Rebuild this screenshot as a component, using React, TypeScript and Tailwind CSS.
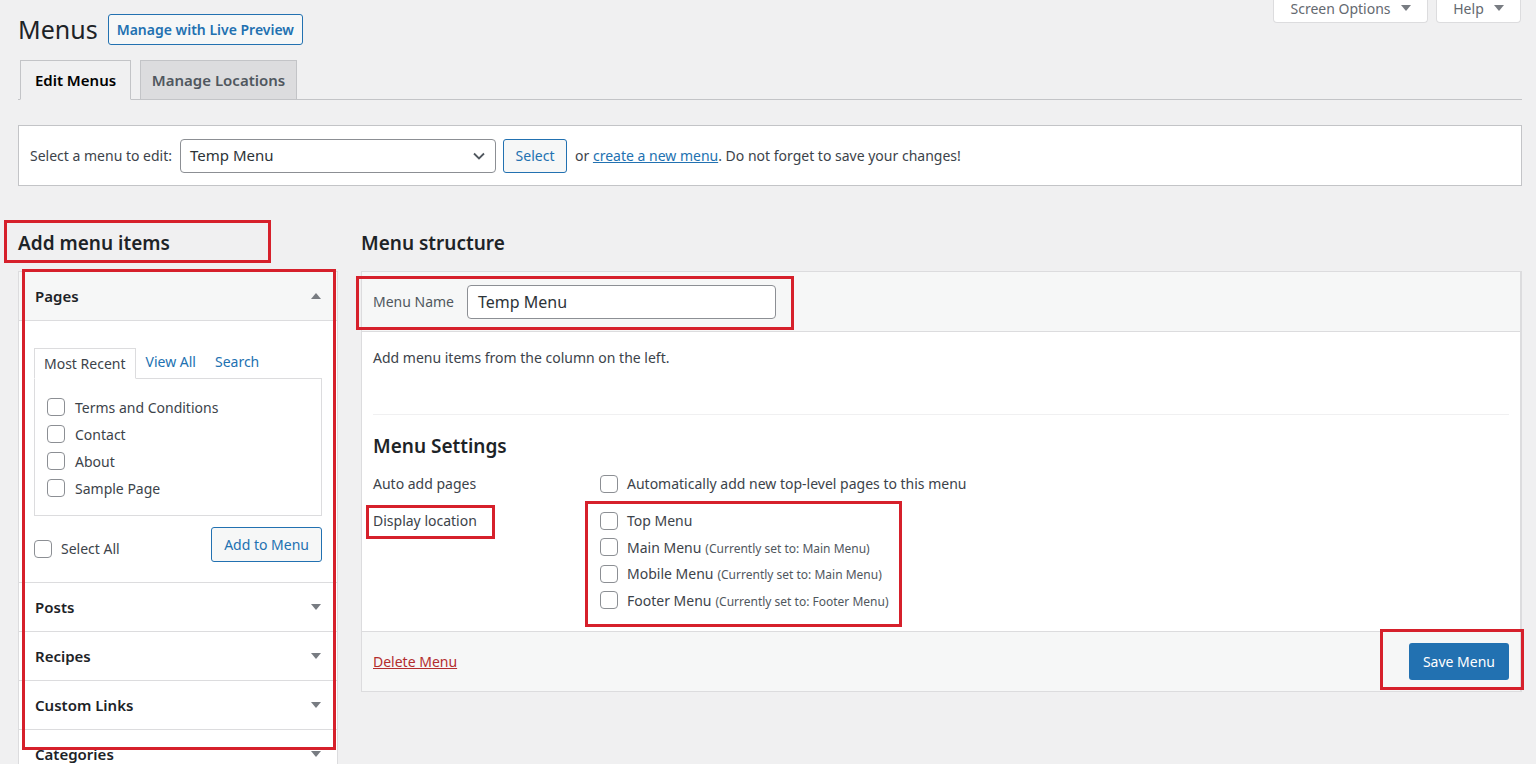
import * as React from "react";

// Red annotation frame laid over a relative parent
function Mark({ className }: { className: string }) {
  return <span className={`pointer-events-none absolute border-[3px] border-[#d6202b] ${className}`} />;
}

function Box({ className = "" }: { className?: string }) {
  return (
    <span
      className={`inline-block h-[18px] w-[18px] shrink-0 rounded-[4px] border border-[#8c8f94] bg-white ${className}`}
    />
  );
}

function Caret({ up = false }: { up?: boolean }) {
  return (
    <svg width="10" height="6" viewBox="0 0 10 6" className="fill-[#787c82]">
      {up ? <path d="M0 6 L5 0 L10 6 Z" /> : <path d="M0 0 L10 0 L5 6 Z" />}
    </svg>
  );
}

function SectionRow({ title }: { title: string }) {
  return (
    <div className="flex h-[49px] items-center justify-between border-t border-[#dcdcde] px-[16px]">
      <span className="text-[15px] font-semibold text-[#1d2327]">{title}</span>
      <Caret />
    </div>
  );
}

const pages = ["Terms and Conditions", "Contact", "About", "Sample Page"];

const locations = [
  { name: "Top Menu", note: "" },
  { name: "Main Menu", note: "(Currently set to: Main Menu)" },
  { name: "Mobile Menu", note: "(Currently set to: Main Menu)" },
  { name: "Footer Menu", note: "(Currently set to: Footer Menu)" },
];

export default function App() {
  return (
    <div className="h-[764px] overflow-hidden bg-[#f0f0f1] pl-[18px] pr-[14px] font-['Noto_Sans',sans-serif] text-[14px] text-[#3c434a]">
      {/* screen meta tabs */}
      <div className="float-right flex gap-[8px] pr-[1px]">
        <div className="flex h-[23px] w-[155px] items-center justify-center gap-[10px] rounded-b-[4px] border border-t-0 border-[#dcdcde] bg-white text-[14px] leading-[18px] text-[#646970]">
          <span className="-mt-[5px]">Screen Options</span>
          <span className="-mt-[6px]">
            <Caret />
          </span>
        </div>
        <div className="flex h-[23px] w-[85px] items-center justify-center gap-[10px] rounded-b-[4px] border border-t-0 border-[#dcdcde] bg-white text-[14px] leading-[18px] text-[#646970]">
          <span className="-mt-[5px]">Help</span>
          <span className="-mt-[6px]">
            <Caret />
          </span>
        </div>
      </div>

      <div className="flex items-center gap-[10px] pt-[12px]">
        <h1 className="text-[25px] leading-[34px] text-[#1d2327]">Menus</h1>
        <button className="h-[31px] rounded-[3px] border border-[#2271b1] bg-[#f6f7f7] px-[8px] text-[14px] font-semibold text-[#2271b1]">
          Manage with Live Preview
        </button>
      </div>

      {/* nav tabs */}
      <div className="mt-[14px] flex gap-[9px] border-b border-[#c3c4c7] pl-[2px]">
        <div className="-mb-px flex h-[40px] w-[111px] items-center justify-center border border-b-[#f0f0f1] border-[#c3c4c7] bg-[#f0f0f1] text-[15px] font-semibold text-[#000]">
          Edit Menus
        </div>
        <div className="flex h-[39px] w-[157px] items-center justify-center border border-b-0 border-[#c3c4c7] bg-[#dcdcde] text-[15px] font-semibold text-[#50575e]">
          Manage Locations
        </div>
      </div>

      {/* menu picker */}
      <div className="mt-[25px] flex h-[61px] items-center border border-[#c3c4c7] bg-white pl-[11px] text-[14px]">
        <span>Select a menu to edit:</span>
        <div className="ml-[8px] flex h-[34px] w-[316px] items-center justify-between rounded-[4px] border border-[#8c8f94] pl-[9px] pr-[10px] text-[15px] text-[#2c3338]">
          <span>Temp Menu</span>
          <svg width="12" height="8" viewBox="0 0 12 8" fill="none" stroke="#50575e" strokeWidth="1.8">
            <path d="M1 1.5 L6 6.5 L11 1.5" />
          </svg>
        </div>
        <button className="ml-[7px] h-[34px] w-[64px] rounded-[3px] border border-[#2271b1] bg-[#f6f7f7] text-[14px] text-[#2271b1]">
          Select
        </button>
        <span className="ml-[8px]">
          or <a className="text-[#2271b1] underline">create a new menu</a>. Do not forget to save your changes!
        </span>
      </div>

      <div className="mt-[37px] flex gap-[23px]">
        {/* left column */}
        <div className="w-[320px] shrink-0">
          <div className="relative">
            <h2 className="h-[40px] text-[19px] font-semibold leading-[40px] text-[#1d2327]">Add menu items</h2>
            <Mark className="-left-[14px] -top-[3px] h-[43px] w-[267px]" />
          </div>
          <div className="relative mt-[8px] border border-[#dcdcde] bg-white">
            <div className="flex h-[49px] items-center justify-between border-b border-[#dcdcde] bg-[#f6f7f7] px-[16px]">
              <span className="text-[15px] font-semibold text-[#1d2327]">Pages</span>
              <Caret up />
            </div>
            <div className="px-[15px] pb-[20px] pt-[27px]">
              <div className="flex items-end text-[14px]">
                <div className="-mb-px flex h-[31px] items-center border border-b-white border-[#dcdcde] bg-white px-[9px] text-[#3c434a]">
                  Most Recent
                </div>
                <span className="ml-[10px] pb-[6px] text-[#2271b1]">View All</span>
                <span className="ml-[19px] pb-[6px] text-[#2271b1]">Search</span>
              </div>
              <div className="flex flex-col gap-[9px] border border-[#dcdcde] px-[12px] pb-[18px] pt-[19px]">
                {pages.map((p) => (
                  <label key={p} className="flex h-[18px] items-center gap-[10px]">
                    <Box />
                    <span>{p}</span>
                  </label>
                ))}
              </div>
              <div className="mt-[11px] flex items-center justify-between">
                <label className="mt-[8px] flex items-center gap-[9px]">
                  <Box />
                  <span>Select All</span>
                </label>
                <button className="h-[35px] rounded-[3px] border border-[#2271b1] bg-[#f6f7f7] px-[12px] text-[14px] text-[#2271b1]">
                  Add to Menu
                </button>
              </div>
            </div>
            <SectionRow title="Posts" />
            <SectionRow title="Recipes" />
            <SectionRow title="Custom Links" />
            <SectionRow title="Categories" />
            <Mark className="left-[3px] -top-[3px] h-[481px] w-[314px]" />
          </div>
        </div>

        {/* right column */}
        <div className="flex-1">
          <h2 className="h-[40px] text-[19px] font-semibold leading-[40px] text-[#1d2327]">Menu structure</h2>
          <div className="mt-[8px] border border-r-[2px] border-[#dcdcde] bg-white">
            <div className="relative flex h-[60px] items-center border-b border-[#dcdcde] bg-[#f6f7f7] px-[11px]">
              <span className="text-[14px] text-[#50575e]">Menu Name</span>
              <div className="ml-[13px] flex h-[34px] w-[309px] items-center rounded-[4px] border border-[#8c8f94] bg-white px-[10px] text-[16px] text-[#2c3338]">
                Temp Menu
              </div>
              <Mark className="-left-[6px] top-[4px] h-[54px] w-[438px]" />
            </div>
            <div className="px-[11px]">
              <p className="pt-[15px]">Add menu items from the column on the left.</p>
              <div className="mt-[46px] border-t border-[#f0f0f1]" />
              <h3 className="mt-[17px] text-[19px] font-semibold text-[#1d2327]">Menu Settings</h3>
              <div className="mt-[10px] flex">
                <div className="w-[227px] shrink-0">
                  <div className="h-[26px] leading-[26px]">Auto add pages</div>
                  <div className="relative mt-[11px] h-[26px] leading-[26px]">
                    Display location
                    <Mark className="-left-[7px] -top-[3px] h-[34px] w-[129px]" />
                  </div>
                </div>
                <div>
                  <label className="flex h-[26px] items-center gap-[9px]">
                    <Box />
                    <span>Automatically add new top-level pages to this menu</span>
                  </label>
                  <div className="relative mt-[11px] flex flex-col">
                    {locations.map((l) => (
                      <label key={l.name} className="flex h-[26.5px] items-center gap-[9px]">
                        <Box />
                        <span>
                          {l.name}
                          {l.note && <span className="ml-[4px] text-[12px] text-[#50575e]">{l.note}</span>}
                        </span>
                      </label>
                    ))}
                    <Mark className="-left-[15px] -top-[7px] h-[126px] w-[317px]" />
                  </div>
                </div>
              </div>
              <div className="h-[17px]" />
            </div>
            <div className="relative flex h-[60px] items-center justify-between border-t border-[#dcdcde] bg-[#f6f7f7] px-[11px]">
              <a className="text-[14px] text-[#b32d2e] underline">Delete Menu</a>
              <button className="h-[37px] rounded-[3px] bg-[#2271b1] px-[14px] text-[14px] text-white">Save Menu</button>
              <Mark className="-right-[4px] -top-[3px] h-[61px] w-[144px]" />
            </div>
          </div>
        </div>
      </div>
    </div>
  );
}
